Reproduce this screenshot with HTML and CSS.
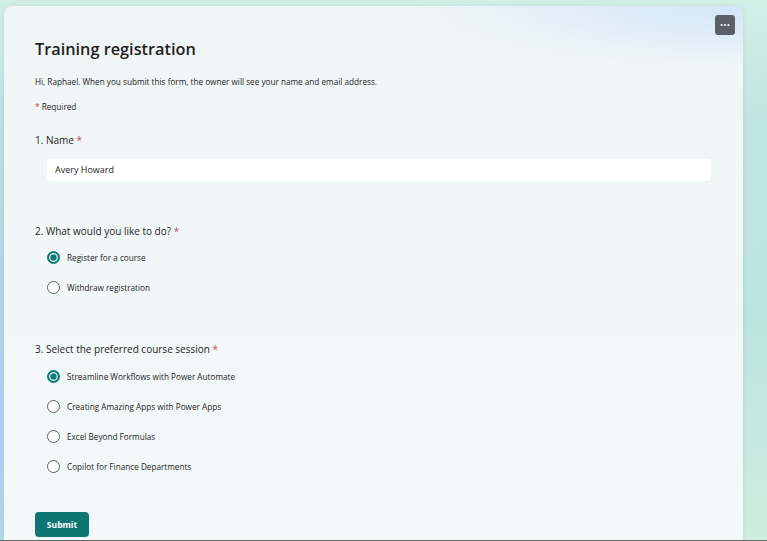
FILE: index.html
```html
<!DOCTYPE html>
<html lang="en">
<head>
  <meta charset="UTF-8">
  <meta name="viewport" content="width=device-width, initial-scale=1.0">
  <title>Training registration</title>
  <link rel="stylesheet" href="styles.css">
</head>
<body>
  <!-- form card -->
  <main class="form-card">
    <button class="more-btn" aria-label="More options">
      <svg width="10" height="4" viewBox="0 0 10 4"><circle cx="1.6" cy="2" r="1.1" fill="#fff"/><circle cx="5" cy="2" r="1.1" fill="#fff"/><circle cx="8.4" cy="2" r="1.1" fill="#fff"/></svg>
    </button>

    <h1 class="form-title">Training registration</h1>
    <p class="form-intro">Hi, Raphael. When you submit this form, the owner will see your name and email address.</p>
    <p class="required-note"><span class="req">*</span> Required</p>

    <section class="question q-name">
      <div class="q-title">1. Name <span class="req">*</span></div>
      <div class="text-input">Avery Howard</div>
    </section>

    <section class="question q-action">
      <div class="q-title">2. What would you like to do? <span class="req">*</span></div>
      <div class="options">
        <label class="option"><span class="radio checked"></span>Register for a course</label>
        <label class="option"><span class="radio"></span>Withdraw registration</label>
      </div>
    </section>

    <section class="question q-session">
      <div class="q-title">3. Select the preferred course session <span class="req">*</span></div>
      <div class="options">
        <label class="option"><span class="radio checked"></span>Streamline Workflows with Power Automate</label>
        <label class="option"><span class="radio"></span>Creating Amazing Apps with Power Apps</label>
        <label class="option"><span class="radio"></span>Excel Beyond Formulas</label>
        <label class="option"><span class="radio"></span>Copilot for Finance Departments</label>
      </div>
    </section>

    <button class="submit-btn">Submit</button>
  </main>
  <div class="bottom-edge"></div>
</body>
</html>
```

FILE: styles.css
```css
/* page */
html, body {
  height: 100%;
}
body {
  margin: 0;
  font-family: 'Open Sans', 'Noto Sans', sans-serif;
  color: #242424;
  display: flex;
  flex-direction: column;
  overflow: hidden;
  background:
    radial-gradient(ellipse 12px 70% at 0 80%, #aacdf3, rgba(170, 205, 243, 0) 100%),
    linear-gradient(to bottom, #d2efe6 0%, #bde4e1 25%, #bce4df 60%, #cdeedf 100%);
}

/* card */
.form-card {
  position: relative;
  flex: 1;
  margin: 6px 24px 0 4px;
  padding: 31px 32px 0 31px;
  border-radius: 8px 8px 0 0;
  background:
    radial-gradient(ellipse 45% 12% at 100% 0, #d2e6fa 0%, rgba(210, 230, 250, 0) 100%),
    linear-gradient(to bottom, #f0f6f6 0%, #f3f8f8 100%);
  box-shadow: 0 0 4px rgba(0, 0, 0, 0.08);
}
.more-btn {
  position: absolute;
  top: 9px;
  right: 8px;
  width: 20px;
  height: 20px;
  padding: 0;
  border: none;
  border-radius: 3px;
  background: #5b6068;
  display: flex;
  align-items: center;
  justify-content: center;
}

.form-title {
  margin: 0;
  font-size: 16.3px;
  line-height: 24px;
  font-weight: 600;
  color: #1f1f1f;
}
.form-intro {
  margin: 14px 0 0;
  font-size: 8.2px;
  line-height: 14px;
  color: #242424;
}
.required-note {
  margin: 11px 0 0;
  font-size: 8.2px;
  line-height: 14px;
}
.req {
  color: #c4314b;
}
.q-title .req {
  color: #c8505f;
}

/* questions */
.question .q-title {
  font-size: 10px;
  line-height: 16px;
}
.q-name {
  margin-top: 18px;
}
.q-action {
  margin-top: 42px;
}
.q-session {
  margin-top: 39px;
}
.text-input {
  margin: 11px 0 0 12px;
  height: 22px;
  padding: 0 8px;
  background: #fff;
  border-radius: 3px;
  font-size: 9px;
  line-height: 22px;
}
.options {
  display: flex;
  flex-direction: column;
  margin: 3px 0 0 12px;
}
.q-session .options {
  margin-top: 4px;
}
.option {
  height: 30px;
  display: flex;
  align-items: center;
  gap: 7px;
  font-size: 8.2px;
}
.radio {
  box-sizing: border-box;
  width: 13px;
  height: 13px;
  border-radius: 50%;
  border: 1px solid #5f5f5f;
  background: #fff;
}
.radio.checked {
  border: 2px solid #0f7b78;
  background: #0f7b78;
  box-shadow: inset 0 0 0 1.3px #fff;
}

/* submit */
.submit-btn {
  margin-top: 31px;
  width: 54px;
  height: 25px;
  border: none;
  border-radius: 4px;
  background: #0d7674;
  color: #fff;
  font-family: inherit;
  font-size: 8.5px;
  font-weight: 700;
  padding: 0;
}

.bottom-edge {
  height: 1px;
  background: #6e6e6e;
}
```
